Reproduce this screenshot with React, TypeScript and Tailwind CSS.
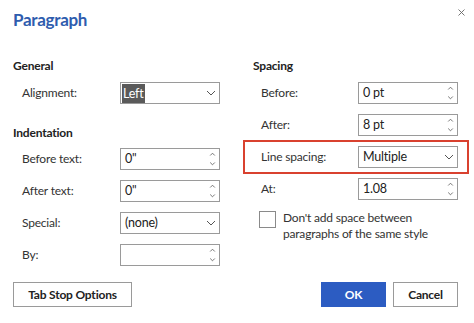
import React from "react";

const font = { fontFamily: 'Lato, "Open Sans", sans-serif' };

function Spinner() {
  return (
    <svg width="7" height="16" viewBox="0 0 7 16" className="shrink-0">
      <path d="M1.2 4.5 L3.5 2.2 L5.8 4.5" fill="none" stroke="#666" strokeWidth="0.9" />
      <path d="M1.2 11.5 L3.5 13.8 L5.8 11.5" fill="none" stroke="#666" strokeWidth="0.9" />
    </svg>
  );
}

function Chevron() {
  return (
    <svg width="10" height="6" viewBox="0 0 10 6" className="shrink-0">
      <path d="M1 1 L5 5 L9 1" fill="none" stroke="#555" strokeWidth="1" />
    </svg>
  );
}

function Field({ value, kind }: { value: React.ReactNode; kind: "spin" | "select" }) {
  return (
    <div className="w-[100px] h-[22px] border border-[#9a9a9a] bg-white flex items-center justify-between pl-[4px] pr-[3px] text-[12.5px] tracking-[-0.2px] text-[#222]">
      <span className="leading-none">{value}</span>
      {kind === "spin" ? <Spinner /> : <Chevron />}
    </div>
  );
}

function Row({
  label,
  value,
  kind,
  right,
}: {
  label: string;
  value: React.ReactNode;
  kind: "spin" | "select";
  right?: boolean;
}) {
  return (
    <div className="flex items-center h-[22px]">
      <div
        className={
          right
            ? "w-[105px] pl-[8px] text-[12px] tracking-[-0.2px] text-[#333]"
            : "w-[107px] pl-[9px] text-[12px] tracking-[-0.2px] text-[#333]"
        }
      >
        {label}
      </div>
      <Field value={value} kind={kind} />
    </div>
  );
}

function Header({ children }: { children: React.ReactNode }) {
  return (
    <div className="h-[16px] leading-[16px] text-[12px] tracking-[-0.2px] font-bold text-[#222]">{children}</div>
  );
}

export default function App() {
  return (
    <div className="w-[474px] h-[323px] bg-white relative flex flex-col" style={font}>
      <div className="flex items-start justify-between pl-[13px] pr-[9px] pt-[8px] h-[58px]">
        <div className="text-[17px] leading-[24px] tracking-[-0.3px] font-bold text-[#2e5cae]">Paragraph</div>
        <svg width="7" height="7" viewBox="0 0 7 7" className="mt-[1px]">
          <path d="M0.5 0.5 L6.5 6.5 M6.5 0.5 L0.5 6.5" stroke="#666" strokeWidth="0.9" />
        </svg>
      </div>
      <div className="flex h-[208px]">
        <div className="w-[240px] pl-[13px] flex flex-col">
          <Header>General</Header>
          <div className="mt-[8px]">
            <Row
              label="Alignment:"
              kind="select"
              value={
                <span className="bg-[#5a5a5a] text-white px-[1px] -ml-[3px] inline-block h-[19px] leading-[19px]">
                  Left
                </span>
              }
            />
          </div>
          <div className="mt-[21px]">
            <Header>Indentation</Header>
          </div>
          <div className="mt-[7px] flex flex-col gap-[10px]">
            <Row label="Before text:" value={'0"'} kind="spin" />
            <Row label="After text:" value={'0"'} kind="spin" />
            <Row label="Special:" value="(none)" kind="select" />
            <Row label="By:" value="" kind="spin" />
          </div>
        </div>
        <div className="flex-1 pl-[13px] flex flex-col">
          <Header>Spacing</Header>
          <div className="mt-[8px] flex flex-col gap-[10px]">
            <Row right label="Before:" value="0 pt" kind="spin" />
            <Row right label="After:" value="8 pt" kind="spin" />
            <div className="-ml-[10px] w-[226px] -my-[6px] border-2 border-[#d9412f] py-[4px] pl-[8px]">
              <Row right label="Line spacing:" value="Multiple" kind="select" />
            </div>
            <Row right label="At:" value="1.08" kind="spin" />
          </div>
          <div className="mt-[10px] flex items-start">
            <div className="ml-[6px] mt-[1px] w-[17px] h-[17px] border border-[#8a8a8a] bg-white shrink-0" />
            <div className="ml-[7px] text-[12px] tracking-[-0.2px] leading-[16px] text-[#333]">
              Don't add space between
              <br />
              paragraphs of the same style
            </div>
          </div>
        </div>
      </div>
      <div className="flex items-center justify-between pl-[13px] pr-[16px] mt-[16px]">
        <button className="w-[119px] h-[25px] border border-[#9a9a9a] bg-white text-[12px] tracking-[-0.2px] font-bold text-[#222]">
          Tab Stop Options
        </button>
        <div className="flex gap-[7px]">
          <button className="w-[65px] h-[25px] bg-[#2c5cc2] text-white text-[12px] tracking-[-0.2px] font-bold">OK</button>
          <button className="w-[65px] h-[25px] border border-[#9a9a9a] bg-white text-[12px] tracking-[-0.2px] font-bold text-[#222]">
            Cancel
          </button>
        </div>
      </div>
    </div>
  );
}
